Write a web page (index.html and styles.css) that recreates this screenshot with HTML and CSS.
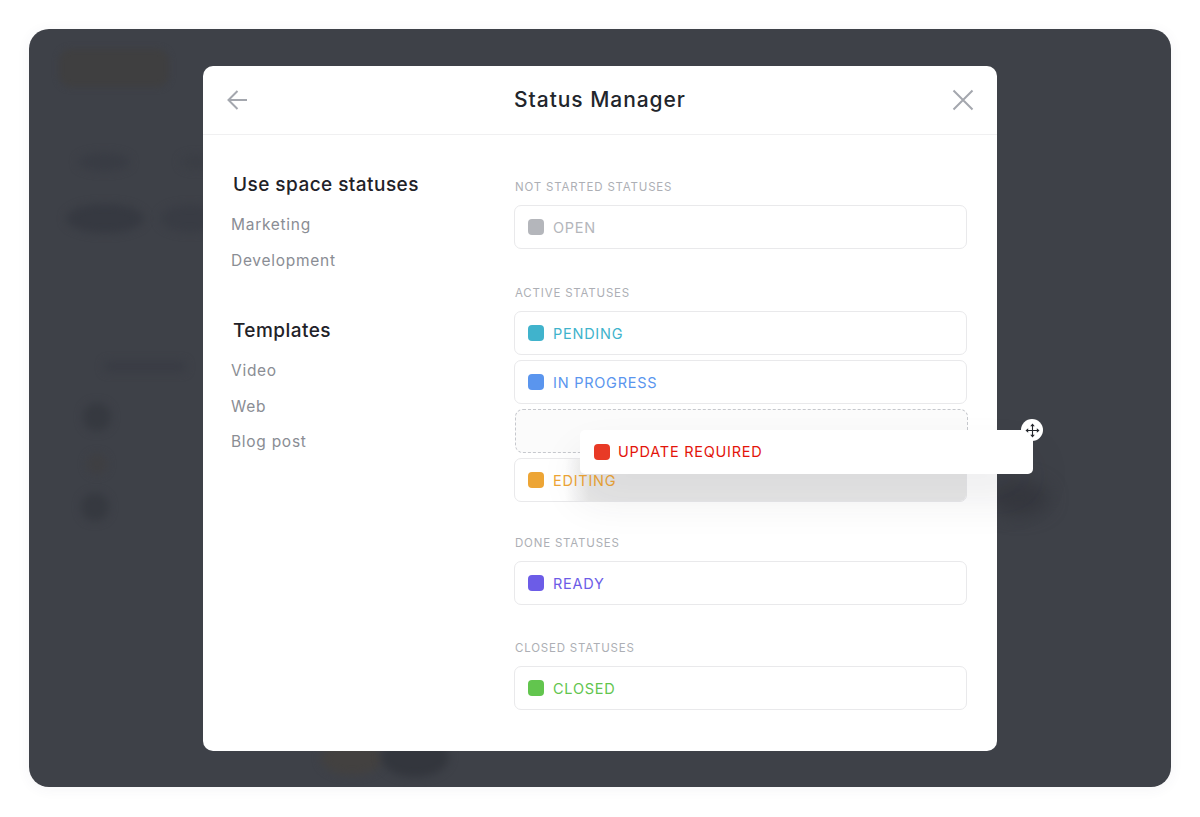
FILE: index.html
```html
<!DOCTYPE html>
<html lang="en">
<head>
<meta charset="utf-8">
<title>Status Manager</title>
<link rel="stylesheet" href="styles.css">
</head>
<body>
<div class="frame">
  <div class="blob b-logo"></div>
  <div class="blob b-nav1"></div>
  <div class="blob b-nav2"></div>
  <div class="blob b-tab1"></div>
  <div class="blob b-tab2"></div>
  <div class="blob b-line"></div>
  <div class="blob b-dot1"></div>
  <div class="blob b-dot2"></div>
  <div class="blob b-dot3"></div>
  <div class="blob b-btm1"></div>
  <div class="blob b-btm2"></div>
  <div class="blob b-shadow"></div>
  <section class="modal">
    <header class="modal-head">
      <svg class="icon" viewBox="0 0 22 22" width="22" height="22" aria-hidden="true"><path d="M21 11H2.500M11.500 2L2.500 11L11.500 20"/></svg>
      <h1>Status Manager</h1>
      <svg class="icon" viewBox="0 0 22 22" width="22" height="22" aria-hidden="true"><path d="M1.500 1.500L20.500 20.500M20.500 1.500L1.500 20.500"/></svg>
    </header>
    <div class="modal-body">
      <aside class="side">
        <h2>Use space statuses</h2>
        <ul>
          <li>Marketing</li>
          <li>Development</li>
        </ul>
        <h2 class="second">Templates</h2>
        <ul>
          <li>Video</li>
          <li>Web</li>
          <li>Blog post</li>
        </ul>
      </aside>
      <div class="groups">
        <div class="group">
          <h3>NOT STARTED STATUSES</h3>
          <div class="card c-open"><i></i><span>OPEN</span></div>
        </div>
        <div class="group">
          <h3>ACTIVE STATUSES</h3>
          <div class="card c-pending"><i></i><span>PENDING</span></div>
          <div class="card c-progress"><i></i><span>IN PROGRESS</span></div>
          <div class="card slot"></div>
          <div class="card c-editing"><i></i><span>EDITING</span><b class="shade"></b></div>
          <div class="card drag c-update">
            <i></i><span>UPDATE REQUIRED</span>
            <div class="grip">
              <svg viewBox="0 0 16 16" width="15" height="15" aria-hidden="true"><path class="g-line" d="M8 2V14M2 8H14"/><path class="g-head" d="M8 .5L10.400 3.400H5.600ZM8 15.500L5.600 12.600H10.400ZM.5 8L3.400 5.600V10.400ZM15.500 8L12.600 10.400V5.600Z"/></svg>
            </div>
          </div>
        </div>
        <div class="group done">
          <h3>DONE STATUSES</h3>
          <div class="card c-ready"><i></i><span>READY</span></div>
        </div>
        <div class="group closed">
          <h3>CLOSED STATUSES</h3>
          <div class="card c-closed"><i></i><span>CLOSED</span></div>
        </div>
      </div>
    </div>
  </section>
</div>
</body>
</html>
```
FILE: styles.css
```css
* { box-sizing: border-box; }
html, body { margin: 0; height: 817px; overflow: hidden; background: #fff; }
body { padding: 29px 29px 30px; font-family: "Inter", "Noto Sans", sans-serif; }

.frame {
  position: relative;
  height: 758px;
  padding-top: 37px;
  display: flex;
  justify-content: center;
  align-items: flex-start;
  overflow: visible;
  background: #3e4148;
  border-radius: 20px;
  box-shadow: 0 2px 14px rgba(60, 70, 110, .06);
}

.blob { position: absolute; border-radius: 50%; filter: blur(4px); }
.b-logo { left: 30px; top: 20px; width: 110px; height: 38px; background: #3f3f40; border-radius: 12px; filter: blur(3px); }
.b-nav1 { left: 49px; top: 124px; width: 52px; height: 18px; background: #393c44; }
.b-nav2 { left: 152px; top: 126px; width: 30px; height: 14px; background: #3b3e45; }
.b-tab1 { left: 37px; top: 175px; width: 78px; height: 29px; background: #363941; }
.b-tab2 { left: 131px; top: 176px; width: 60px; height: 27px; background: #393c44; }
.b-line { left: 75px; top: 332px; width: 82px; height: 11px; background: #393c44; border-radius: 6px; }
.b-dot1 { left: 54px; top: 374px; width: 28px; height: 28px; background: #363940; }
.b-dot2 { left: 58px; top: 425px; width: 20px; height: 20px; background: #3f3f42; }
.b-dot3 { left: 52px; top: 464px; width: 28px; height: 28px; background: #363940; }
.b-btm1 { left: 292px; top: 712px; width: 62px; height: 34px; background: #434140; }
.b-btm2 { left: 352px; top: 708px; width: 68px; height: 40px; background: #33363d; }
.b-shadow { left: 960px; top: 452px; width: 60px; height: 34px; background: #35373e; filter: blur(9px); }

.modal {
  position: relative;
  width: 794px;
  height: 685px;
  background: #fff;
  border-radius: 10px;
}

.modal-head {
  height: 69px;
  padding: 0 23px;
  display: flex;
  align-items: center;
  justify-content: space-between;
  border-bottom: 1px solid #f0f0f1;
}
.modal-head h1 {
  margin: 0 0 1px;
  font-size: 21px;
  font-weight: 500;
  color: #22252b;
  letter-spacing: .95px;
}
.icon { fill: none; stroke: #a4a7ae; stroke-width: 2; display: block; }

.modal-body { display: flex; padding: 38px 30px 0 28px; }

.side { width: 283px; }
.side h2 {
  margin: 0 0 0 2px;
  font-size: 19px;
  line-height: 24px;
  font-weight: 500;
  color: #1f2228;
  letter-spacing: .45px;
}
.side h2.second { margin-top: 35px; }
.side ul { list-style: none; margin: 16px 0 0; padding: 0; }
.side li {
  height: 35.500px;
  line-height: 24px;
  font-size: 15.500px;
  font-weight: 400;
  color: #8a8d94;
  letter-spacing: .72px;
}

.groups { width: 453px; padding-top: 7px; }
.group { position: relative; margin-bottom: 37px; }
.group.done { margin-top: -3px; margin-bottom: 36px; }
.group h3 {
  margin: 0 0 11px;
  padding-left: 1px;
  height: 14px;
  line-height: 14px;
  font-size: 11.500px;
  font-weight: 400;
  color: #adafb5;
  letter-spacing: .8px;
}

.card {
  position: relative;
  height: 44px;
  margin-bottom: 5px;
  padding-left: 13px;
  display: flex;
  align-items: center;
  gap: 9px;
  background: #fff;
  border: 1px solid #e9e9eb;
  border-radius: 7px;
  font-size: 14.500px;
  font-weight: 400;
  letter-spacing: .75px;
}
.group .card:last-child { margin-bottom: 0; }
.card i { flex: none; width: 16px; height: 16px; border-radius: 4px; background: currentColor; }
.card span { position: relative; z-index: 1; }

.c-open { color: #b4b6bb; }
.c-pending { color: #40b3cc; }
.c-progress { color: #5a95ee; }
.c-editing { color: #eda535; }
.c-ready { color: #6c5ce7; }
.c-closed { color: #62c54e; }
.c-update { color: #e3140a; }
.c-update i { background: #e83a26; }

.slot { border: 1px dashed #c6c8cd; background: #fbfbfb; border-radius: 8px; margin-left: 1px; margin-right: -1px; }

.shade {
  position: absolute;
  left: 50px;
  right: 0;
  top: 0;
  bottom: 0;
  background: linear-gradient(90deg, rgba(0,0,0,0) 0, #e9e9e9 24px);
  border-radius: 0 6px 6px 0;
}

.drag {
  position: absolute;
  left: 66px;
  top: 144px;
  width: 453px;
  margin: 0;
  border: 0;
  border-radius: 5px;
  padding: 0 0 1px 14px;
  gap: 8px;
  z-index: 3;
  box-shadow: 0 24px 44px rgba(40, 44, 60, .09);
}
.grip {
  position: absolute;
  right: -10px;
  top: -11px;
  width: 22px;
  height: 22px;
  display: flex;
  align-items: center;
  justify-content: center;
  background: #fff;
  border-radius: 50%;
}
.g-line { fill: none; stroke: #24272d; stroke-width: 1.200; }
.g-head { fill: #24272d; }
```
